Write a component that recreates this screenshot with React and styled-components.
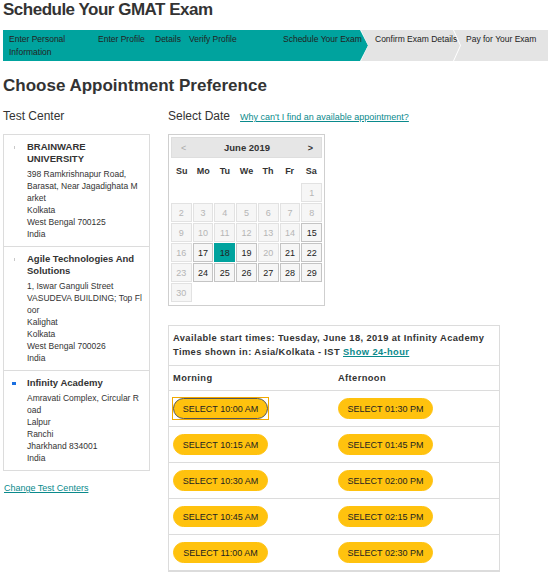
import React from 'react'
import styled, { createGlobalStyle } from 'styled-components';

const GlobalStyle = createGlobalStyle`
  body {
    margin: 0;
    background: #ffffff;
    font-family: "Liberation Sans", Arial, sans-serif;
    color: #333333;
  }
`;

const TEAL = '#00a39e';

const Page = styled.div`
  padding: 0 0 20px 3px;
`;

const Title = styled.h1`
  margin: 0;
  font-size: 17px;
  line-height: 20px;
  font-weight: 700;
  letter-spacing: -0.5px;
  color: #333;
`;

const Progress = styled.div`
  display: flex;
  margin-top: 10px;
  height: 31px;
  width: 560px;
`;

const Done = styled.div`
  display: flex;
  flex-shrink: 0;
  width: 365px;
  padding-left: 6px;
  box-sizing: border-box;
  background: ${TEAL};
  clip-path: polygon(0 0, calc(100% - 8px) 0, 100% 50%, calc(100% - 8px) 100%, 0 100%);
`;

const Todo = styled.div`
  flex-shrink: 0;
  width: ${p => p.$w}px;
  margin-left: ${p => p.$ml}px;
  padding-left: ${p => p.$pl}px;
  box-sizing: border-box;
  background: #e4e4e4;
  clip-path: polygon(0 0, calc(100% - 7px) 0, 100% 50%, calc(100% - 7px) 100%, 0 100%, 7px 50%);
  white-space: nowrap;
`;

const StepText = styled.div`
  width: ${p => (p.$w ? `${p.$w}px` : 'auto')};
  flex-shrink: 0;
  padding-top: 3px;
  font-size: 8.5px;
  line-height: 13px;
  color: #222;
  white-space: nowrap;
`;

const Heading = styled.h2`
  margin: 15px 0 0;
  font-size: 17px;
  line-height: 20px;
  font-weight: 700;
  color: #333;
`;

const Columns = styled.div`
  display: flex;
  gap: 18px;
  margin-top: 13px;
`;

const LeftCol = styled.div`
  width: 147px;
  flex-shrink: 0;
`;

const RightCol = styled.div`
  width: 332px;
`;

const LabelRow = styled.div`
  display: flex;
  align-items: baseline;
  gap: 10px;
  height: 14px;
  margin-bottom: 11px;
`;

const Label = styled.div`
  font-size: 12px;
  line-height: 14px;
  color: #333;
`;

const Link = styled.a`
  font-size: ${p => p.$size || 9}px;
  letter-spacing: ${p => p.$ls || 0}px;
  color: #0a8a8c;
  text-decoration: underline;
  cursor: pointer;
`;

const CenterList = styled.div`
  border: 1px solid #dcdcdc;
`;

const Center = styled.div`
  display: flex;
  padding: 6px 4px 6px 8px;
  & + & {
    border-top: 1px solid #dcdcdc;
  }
`;

const Radio = styled.span`
  width: 15px;
  flex-shrink: 0;
  padding-top: 5px;
  &::before {
    content: '';
    display: block;
    width: ${p => (p.$checked ? 4 : 1)}px;
    height: 3px;
    margin-left: ${p => (p.$checked ? 0 : 2)}px;
    background: ${p => (p.$checked ? '#1a6fe0' : '#c8c8c8')};
  }
`;

const CenterBody = styled.div`
  flex: 1;
`;

const CenterName = styled.div`
  font-size: 9.5px;
  line-height: 12px;
  font-weight: 700;
  color: #333;
  margin-bottom: 3px;
`;

const AddrLine = styled.div`
  font-size: 8.5px;
  line-height: 12px;
  color: #333;
  white-space: nowrap;
`;

const ChangeRow = styled.div`
  margin-top: 9px;
  padding-left: 1px;
  line-height: 12px;
`;

const Calendar = styled.div`
  width: 157px;
  box-sizing: border-box;
  border: 1px solid #cfcfcf;
  padding: 2px 2px 3px;
`;

const CalHeader = styled.div`
  display: flex;
  align-items: center;
  justify-content: space-between;
  height: 21px;
  padding: 0 8px 0 9px;
  background: #e6e6e6;
  border: 1px solid #dedede;
  box-sizing: border-box;
  font-size: 9.5px;
  font-weight: 700;
  color: #333;
`;

const Nav = styled.span`
  font-size: 9px;
  font-weight: ${p => (p.$off ? 400 : 700)};
  color: ${p => (p.$off ? '#aaa' : '#333')};
`;

const DayNames = styled.div`
  display: grid;
  grid-template-columns: repeat(7, 1fr);
  height: 25px;
  align-items: center;
  text-align: center;
  font-size: 9px;
  font-weight: 700;
  color: #333;
`;

const Grid = styled.div`
  display: grid;
  grid-template-columns: repeat(7, 1fr);
  grid-auto-rows: 19px;
  gap: 1px 1px;
`;

const Day = styled.div`
  display: flex;
  align-items: center;
  justify-content: center;
  box-sizing: border-box;
  font-size: 9px;
  border: 1px solid ${p => (p.$sel ? TEAL : p.$on ? '#c4c4c4' : '#e2e2e2')};
  background: ${p => (p.$sel ? TEAL : '#f6f6f6')};
  color: ${p => (p.$sel || p.$on ? '#222' : '#b5b5b5')};
`;

const Blank = styled.div``;

const Times = styled.div`
  margin-top: 19px;
  border: 1px solid #dcdcdc;
  border-bottom-width: 2px;
`;

const TimesInfo = styled.div`
  padding: 5px 4px 6px;
  font-size: 9.3px;
  letter-spacing: 0.4px;
  line-height: 14px;
  font-weight: 700;
  color: #333;
  white-space: nowrap;
`;

const TimeRow = styled.div`
  display: grid;
  grid-template-columns: 165px 1fr;
  box-sizing: border-box;
  padding: ${p => (p.$head ? '0 4px' : '7px 4px 0')};
  border-top: 1px solid #dcdcdc;
  height: ${p => (p.$head ? 25 : 36)}px;
  align-items: ${p => (p.$head ? 'center' : 'start')};
`;

const ColHead = styled.div`
  font-size: 9.3px;
  letter-spacing: 0.4px;
  font-weight: 700;
  color: #333;
`;

const Focus = styled.span`
  display: inline-flex;
  margin: -1px 0 0 -1px;
  border: 1px solid #f2a900;
  justify-self: start;
`;

const SlotButton = styled.button`
  display: block;
  width: 95px;
  height: 21px;
  padding: 0;
  border-radius: 11px;
  border: 1px solid ${p => (p.$active ? '#555' : '#ffc20e')};
  background: #ffc20e;
  font-family: "Liberation Sans", Arial, sans-serif;
  font-size: 9px;
  color: #222;
  text-transform: uppercase;
  cursor: pointer;
`;

const centers = [
  {
    name: ['BRAINWARE', 'UNIVERSITY'],
    lines: ['398 Ramkrishnapur Road,', 'Barasat, Near Jagadighata M', 'arket', 'Kolkata', 'West Bengal 700125', 'India'],
  },
  {
    name: ['Agile Technologies And', 'Solutions'],
    lines: ['1, Iswar Ganguli Street', 'VASUDEVA BUILDING; Top Fl', 'oor', 'Kalighat', 'Kolkata', 'West Bengal 700026', 'India'],
  },
  {
    name: ['Infinity Academy'],
    lines: ['Amravati Complex, Circular R', 'oad', 'Lalpur', 'Ranchi', 'Jharkhand 834001', 'India'],
    checked: true,
  },
];

const open = [15, 17, 18, 19, 21, 22, 24, 25, 26, 27, 28, 29];

const morning = ['10:00 AM', '10:15 AM', '10:30 AM', '10:45 AM', '11:00 AM'];
const afternoon = ['01:30 PM', '01:45 PM', '02:00 PM', '02:15 PM', '02:30 PM'];

const App = () => {
  const days = Array.from({ length: 30 }, (_, i) => i + 1);
  return (
    <Page>
      <GlobalStyle />
      <Title>Schedule Your GMAT Exam</Title>
      <Progress>
        <Done>
          <StepText $w={89}>Enter Personal<br />Information</StepText>
          <StepText $w={57}>Enter Profile</StepText>
          <StepText $w={34}>Details</StepText>
          <StepText $w={94}>Verify Profile</StepText>
          <StepText>Schedule Your Exam</StepText>
        </Done>
        <Todo $w={99} $ml={-7} $pl={14}>
          <StepText>Confirm Exam Details</StepText>
        </Todo>
        <Todo $w={120} $ml={-6} $pl={12}>
          <StepText>Pay for Your Exam</StepText>
        </Todo>
      </Progress>

      <Heading>Choose Appointment Preference</Heading>

      <Columns>
        <LeftCol>
          <LabelRow><Label>Test Center</Label></LabelRow>
          <CenterList>
            {centers.map((c, i) => (
              <Center key={i}>
                <Radio $checked={c.checked} />
                <CenterBody>
                  <CenterName>
                    {c.name.map((n, j) => <div key={j}>{n}</div>)}
                  </CenterName>
                  {c.lines.map((l, j) => <AddrLine key={j}>{l}</AddrLine>)}
                </CenterBody>
              </Center>
            ))}
          </CenterList>
          <ChangeRow><Link>Change Test Centers</Link></ChangeRow>
        </LeftCol>

        <RightCol>
          <LabelRow>
            <Label>Select Date</Label>
            <Link>Why can't I find an available appointment?</Link>
          </LabelRow>
          <Calendar>
            <CalHeader>
              <Nav $off>&lt;</Nav>
              <span>June 2019</span>
              <Nav>&gt;</Nav>
            </CalHeader>
            <DayNames>
              {['Su', 'Mo', 'Tu', 'We', 'Th', 'Fr', 'Sa'].map(d => <span key={d}>{d}</span>)}
            </DayNames>
            <Grid>
              {Array.from({ length: 6 }, (_, i) => <Blank key={`b${i}`} />)}
              {days.map(d => (
                <Day key={d} $on={open.includes(d)} $sel={d === 18}>{d}</Day>
              ))}
            </Grid>
          </Calendar>

          <Times>
            <TimesInfo>
              Available start times: Tuesday, June 18, 2019 at Infinity Academy<br />
              Times shown in: Asia/Kolkata - IST <Link $size={9.3} $ls={0.4}>Show 24-hour</Link>
            </TimesInfo>
            <TimeRow $head>
              <ColHead>Morning</ColHead>
              <ColHead>Afternoon</ColHead>
            </TimeRow>
            {morning.map((m, i) => (
              <TimeRow key={m}>
                {i === 0 ? (
                  <Focus><SlotButton $active>Select {m}</SlotButton></Focus>
                ) : (
                  <div><SlotButton>Select {m}</SlotButton></div>
                )}
                <div><SlotButton>Select {afternoon[i]}</SlotButton></div>
              </TimeRow>
            ))}
          </Times>
        </RightCol>
      </Columns>
    </Page>
  )
}

export default App
